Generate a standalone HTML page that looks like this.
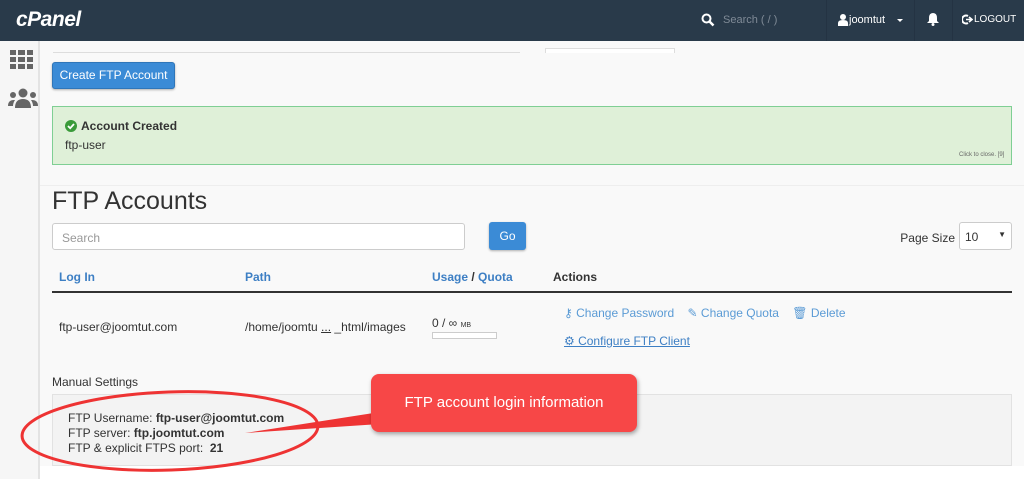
<!DOCTYPE html>
<html><head><style>
*{box-sizing:border-box;margin:0;padding:0}
body{width:1024px;height:479px;overflow:hidden;background:#f9f9f9;font-family:"Liberation Sans",sans-serif;font-size:12px;color:#333;position:relative}
.a{position:absolute;white-space:nowrap}
</style></head><body>
<div class="a" style="left:0;top:0;width:1024px;height:41px;background:#293a4a"></div>
<div class="a" style="left:16px;top:8px;color:#fff;font-size:21px;font-weight:bold;font-style:italic;letter-spacing:-0.5px">cPanel</div>
<svg class="a" style="left:701px;top:13px" width="14" height="14" viewBox="0 0 14 14"><circle cx="5.5" cy="5.5" r="4" stroke="#fff" stroke-width="2" fill="none"/><path d="M8.5 8.5L12.5 12.5" stroke="#fff" stroke-width="2.5"/></svg>
<div class="a" style="left:723px;top:14px;color:#7f8a96;font-size:11px">Search ( / )</div>
<div class="a" style="left:826px;top:0;width:1px;height:41px;background:#243343"></div>
<div class="a" style="left:914px;top:0;width:1px;height:41px;background:#243343"></div>
<div class="a" style="left:952px;top:0;width:1px;height:41px;background:#243343"></div>
<svg class="a" style="left:838px;top:14px" width="10" height="12" viewBox="0 0 10 12"><circle cx="5" cy="3" r="3" fill="#fff"/><path d="M0 12V9Q0 6 5 6Q10 6 10 9V12Z" fill="#fff"/></svg>
<div class="a" style="left:849px;top:14px;color:#fff;font-size:11px">joomtut</div>
<div class="a" style="left:897px;top:19px;border:3px solid transparent;border-top:3px solid #fff"></div>
<svg class="a" style="left:927px;top:12px" width="12" height="14" viewBox="0 0 12 14"><path d="M6 1Q2 1 2 6V9L0 11H12L10 9V6Q10 1 6 1Z" fill="#fff"/><circle cx="6" cy="12.5" r="1.5" fill="#fff"/></svg>
<svg class="a" style="left:962px;top:14px" width="11" height="11" viewBox="0 0 11 11"><path d="M6 2A4 4 0 1 0 6 9" stroke="#fff" stroke-width="2" fill="none"/><path d="M4 5.5H9M7 3L10 5.5L7 8" stroke="#fff" stroke-width="1.6" fill="none"/></svg>
<div class="a" style="left:974px;top:14px;color:#fff;font-size:10px">LOGOUT</div>

<div class="a" style="left:0;top:41px;width:40px;height:438px;background:#f6f6f6;border-right:2px solid #e3e3e3"></div>
<svg class="a" style="left:10px;top:50px" width="24" height="20"><g fill="#666"><rect x="0" y="0" width="6" height="5"/><rect x="8" y="0" width="7" height="5"/><rect x="17" y="0" width="6" height="5"/><rect x="0" y="7" width="6" height="5"/><rect x="8" y="7" width="7" height="5"/><rect x="17" y="7" width="6" height="5"/><rect x="0" y="14" width="6" height="5"/><rect x="8" y="14" width="7" height="5"/><rect x="17" y="14" width="6" height="5"/></g></svg>
<svg class="a" style="left:8px;top:88px" width="30" height="22"><g fill="#666"><circle cx="15" cy="5" r="4.5"/><circle cx="5" cy="7" r="3"/><circle cx="25" cy="7" r="3"/><path d="M7 20Q7 11 15 11Q23 11 23 20Z"/><path d="M0 18Q0 12 6 12L7 12Q5 15 5 18Z"/><path d="M30 18Q30 12 24 12L23 12Q25 15 25 18Z"/></g></svg>

<div class="a" style="left:53px;top:52px;width:467px;height:1px;background:#ddd"></div>
<div class="a" style="left:545px;top:48px;width:130px;height:5px;border:1px solid #ddd;border-bottom:none;background:#fff"></div>
<div class="a" style="left:52px;top:62px;width:123px;height:27px;background:#3b8bd6;border:1px solid #2f76b9;border-radius:3px;color:#fff;font-size:12px;text-align:center;line-height:25px;box-shadow:0 1px 2px rgba(0,0,0,.3)">Create FTP Account</div>

<div class="a" style="left:52px;top:106px;width:960px;height:59px;background:#dff0d8;border:1px solid #7fcf94"></div>
<svg class="a" style="left:65px;top:120px" width="12" height="12"><circle cx="6" cy="6" r="6" fill="#3a9b3a"/><path d="M3 6L5.2 8.2L9 4" stroke="#fff" stroke-width="1.8" fill="none"/></svg>
<div class="a" style="left:81px;top:119px;font-weight:bold;font-size:12px;color:#333">Account Created</div>
<div class="a" style="left:65px;top:138px;font-size:12px">ftp-user</div>
<div class="a" style="left:959px;top:152px;font-size:6px;color:#666">Click to close. [9]</div>

<div class="a" style="left:40px;top:185px;width:984px;height:1px;background:#eee"></div>
<div class="a" style="left:52px;top:187px;font-size:25px;color:#333">FTP Accounts</div>
<div class="a" style="left:52px;top:223px;width:413px;height:27px;background:#fff;border:1px solid #ccc;border-radius:3px;color:#999;padding:7px 9px;font-size:12px">Search</div>
<div class="a" style="left:489px;top:222px;width:37px;height:28px;background:#3b8bd6;border-radius:3px;color:#fff;text-align:center;line-height:28px;box-shadow:0 1px 2px rgba(0,0,0,.3)">Go</div>
<div class="a" style="right:69px;top:231px">Page Size</div>
<div class="a" style="left:959px;top:222px;width:53px;height:28px;background:#fff;border:1px solid #ccc;border-radius:3px;padding:7px 5px">10<span style="position:absolute;right:5px;top:7px;font-size:8px">▼</span></div>

<div class="a" style="left:59px;top:270px;font-weight:bold;color:#3d7fc4">Log In</div>
<div class="a" style="left:245px;top:270px;font-weight:bold;color:#3d7fc4">Path</div>
<div class="a" style="left:432px;top:270px;font-weight:bold;color:#3d7fc4">Usage <span style="color:#333">/</span> Quota</div>
<div class="a" style="left:553px;top:270px;font-weight:bold">Actions</div>
<div class="a" style="left:52px;top:291px;width:960px;height:2px;background:#333"></div>
<div class="a" style="left:59px;top:320px">ftp-user@joomtut.com</div>
<div class="a" style="left:245px;top:320px">/home/joomtu <u>...</u> _html/images</div>
<div class="a" style="left:432px;top:316px">0 / ∞ <span style="font-size:7px">MB</span></div>
<div class="a" style="left:432px;top:332px;width:65px;height:7px;border:1px solid #ccc;background:#fff"></div>
<div class="a" style="left:564px;top:306px;color:#5b9bd5">⚷ Change Password &nbsp;&nbsp;&nbsp;✎ Change Quota &nbsp;&nbsp;&nbsp;🗑 Delete</div>
<div class="a" style="left:564px;top:334px;color:#3d7fc4;text-decoration:underline">⚙ Configure FTP Client</div>

<div class="a" style="left:52px;top:375px">Manual Settings</div>
<div class="a" style="left:52px;top:394px;width:960px;height:72px;background:#f3f3f3;border:1px solid #e2e2e2"></div>
<div class="a" style="left:40px;top:466px;width:984px;height:13px;background:#fff"></div>
<div class="a" style="left:68px;top:411px;line-height:15px">FTP Username: <b>ftp-user@joomtut.com</b><br>FTP server: <b>ftp.joomtut.com</b><br>FTP &amp; explicit FTPS port:&nbsp; <b>21</b></div>
<svg class="a" style="left:0;top:360px" width="660" height="119">
<ellipse cx="170" cy="71" rx="148" ry="39" stroke="#e33" stroke-width="3" fill="none" transform="rotate(-2 170 71)"/>
<path d="M380 52L245 73L380 64Z" fill="#e33"/>
</svg>
<div class="a" style="left:371px;top:374px;width:266px;height:58px;background:#f74747;border-radius:8px;box-shadow:1px 2px 4px rgba(0,0,0,.35);color:#fff;font-size:15px;text-align:center;line-height:58px">FTP account login information</div>
</body></html>
